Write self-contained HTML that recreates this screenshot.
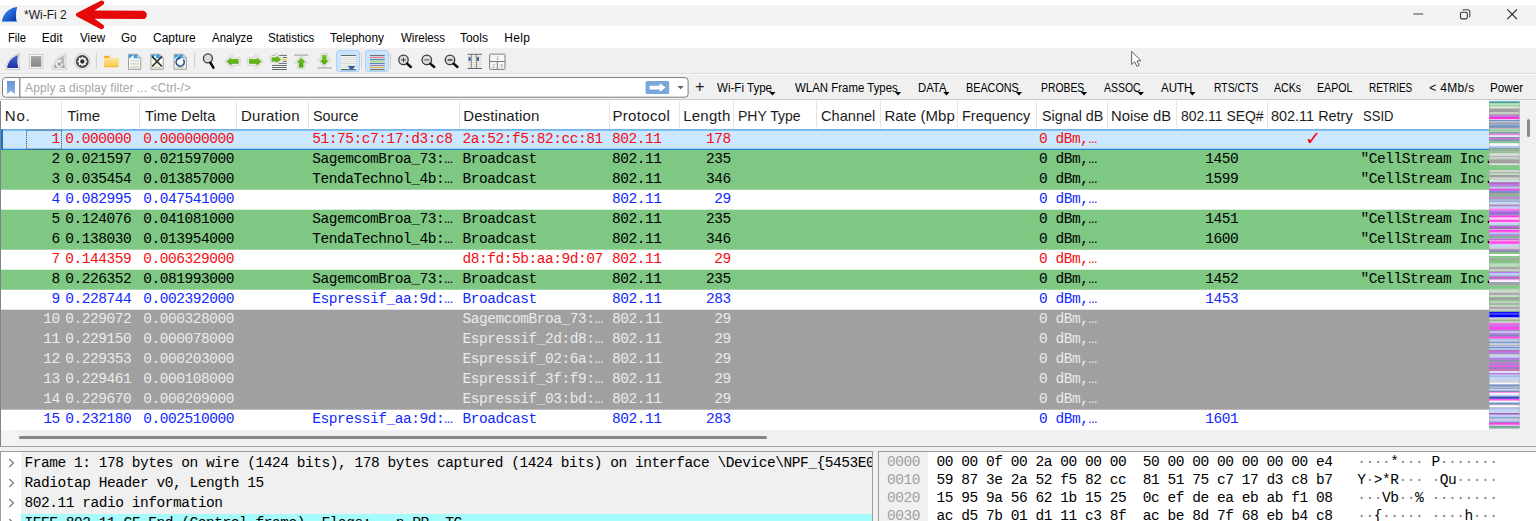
<!DOCTYPE html>
<html lang="en"><head><meta charset="utf-8"><title>Wireshark - Wi-Fi 2</title>
<style>
html,body{margin:0;padding:0;}
body{width:1536px;height:521px;position:relative;overflow:hidden;background:#fff;font-family:'Liberation Sans',sans-serif;}
body div, body span, body svg{position:absolute;}
.s{white-space:pre;line-height:20px;font-family:'Liberation Sans',sans-serif;transform-origin:0 0;}
.m i{font-style:normal;color:#858585;}
.m{white-space:pre;line-height:20px;font-family:'Liberation Mono',monospace;font-size:14.5px;letter-spacing:-0.4514px;}
</style></head>
<body>
<div style="left:0px;top:0px;width:1536px;height:5px;background:#fff;"></div>
<div style="left:0px;top:5px;width:1536px;height:21px;background:#f3f3f3;"></div>
<div style="left:0px;top:26px;width:1536px;height:22px;background:#fff;"></div>
<div style="left:0px;top:48px;width:1536px;height:25px;background:#f0f0f0;"></div>
<div style="left:0px;top:72.5px;width:1536px;height:1px;background:#dedede;"></div>
<div style="left:0px;top:73.5px;width:1536px;height:1px;background:#fafafa;"></div>
<div style="left:0px;top:74.5px;width:1536px;height:25px;background:#f0f0f0;"></div>
<div style="left:0px;top:99px;width:1536px;height:1.2px;background:#c8c8c8;"></div>
<svg style="left:0;top:0" width="1536" height="100" viewBox="0 0 1536 100">
<defs>
<linearGradient id="gfin" x1="0" y1="0" x2="1" y2="1"><stop offset="0" stop-color="#49a0f5"/><stop offset="0.55" stop-color="#1c5fd0"/><stop offset="1" stop-color="#0c2f98"/></linearGradient>
<linearGradient id="gblue" x1="0" y1="0" x2="0" y2="1"><stop offset="0" stop-color="#4c66d6"/><stop offset="1" stop-color="#1e2ea6"/></linearGradient>
<linearGradient id="ggray" x1="0" y1="0" x2="0" y2="1"><stop offset="0" stop-color="#a4a4a4"/><stop offset="1" stop-color="#868686"/></linearGradient>
<linearGradient id="ggray2" x1="0" y1="0" x2="0" y2="1"><stop offset="0" stop-color="#c4c4c4"/><stop offset="1" stop-color="#a2a2a2"/></linearGradient>
<linearGradient id="gpage" x1="0" y1="0" x2="0" y2="1"><stop offset="0" stop-color="#ffffff"/><stop offset="0.35" stop-color="#fdfdf8"/><stop offset="1" stop-color="#f2f2dc"/></linearGradient>
<linearGradient id="gband" x1="0" y1="0" x2="0" y2="1"><stop offset="0" stop-color="#2392e2"/><stop offset="0.7" stop-color="#3ca8ec"/><stop offset="1" stop-color="#bfe2f8"/></linearGradient>
<linearGradient id="gfold" x1="0" y1="0" x2="0" y2="1"><stop offset="0" stop-color="#ffe79a"/><stop offset="1" stop-color="#fcc748"/></linearGradient>
<linearGradient id="ggreen" x1="0" y1="0" x2="0" y2="1"><stop offset="0" stop-color="#7ac628"/><stop offset="1" stop-color="#4aa008"/></linearGradient>
<linearGradient id="gbm" x1="0" y1="0" x2="0" y2="1"><stop offset="0" stop-color="#6496d2"/><stop offset="1" stop-color="#8cb6e4"/></linearGradient>
<g id="page"><path d="M0.5 0.5 H9.3 L12.8 4 V15.5 H0.5 Z" fill="url(#gpage)" stroke="#969696" stroke-width="0.9"/><path d="M1 1 H9.2 L12.3 4.1 V4.9 H1 Z" fill="url(#gband)"/><path d="M2 4.9 C2.9 3 4.2 1.7 5.9 1.1 C5.4 2.4 5.5 3.7 6.2 4.9 Z" fill="#fff"/><path d="M9.3 0.6 V4 H12.7 Z" fill="#ececec" stroke="#a2a2a2" stroke-width="0.6"/></g>
<g id="mag"><circle cx="0" cy="0" r="4.6" fill="#d9d9d9" stroke="#3a3a3a" stroke-width="1.3"/><path d="M3.4 3.6 L7.4 7.4" stroke="#0a0a0a" stroke-width="2.5" stroke-linecap="round"/></g>
</defs>
<path d="M1.9 21.8 C2.6 15.5 6.5 8.6 16.6 6.9 Q17.3 6.8 17.1 7.5 C15.7 11.8 15.5 17 16.8 21.8 Z" fill="url(#gfin)"/>
<path d="M2.2 21.5 H16.4" stroke="#6db0f6" stroke-width="0.9" opacity="0.9"/>
<path d="M76.9 13 L100.7 0.7 A2.4 2.4 0 0 1 103.4 4.6 L94.6 10.5 L142.7 10.8 A4.15 4.15 0 0 1 142.7 19.1 L94.6 18.7 L103.3 25.1 A2.4 2.4 0 0 1 100.5 28.9 L76.9 16.4 A1.9 1.9 0 0 1 76.9 13 Z" fill="#e60909"/>
<path d="M1413.3 14 H1423.2" stroke="#555" stroke-width="1.1"/>
<rect x="1460.5" y="12.3" width="6.8" height="6.6" rx="1.4" fill="none" stroke="#333" stroke-width="1.1"/><path d="M1462.6 10.4 Q1462.9 9.7 1464 9.7 H1467.6 Q1469.8 9.7 1469.8 11.9 V15.6 Q1469.8 16.6 1469.1 16.9" fill="none" stroke="#444" stroke-width="1.1"/>
<path d="M1507.3 9.4 L1517 19.1 M1517 9.4 L1507.3 19.1" stroke="#222" stroke-width="1.1"/>
<path d="M1131.6 51.4 V64.5 L1134.7 61.8 L1136.9 66.4 L1139.1 65.4 L1137 60.9 L1141 60.7 Z" fill="#fff" stroke="#555" stroke-width="0.9" stroke-linejoin="round"/>
<path d="M5.5 69.4 C6.1 62.4 10.4 55.8 19.9 53.2 C18.4 58.6 18.4 63.8 20.1 69.4 Z" fill="#fbfbfb" stroke="#bcbcbc" stroke-width="0.8" stroke-linejoin="round"/><path d="M7.1 68.1 C7.5 63 11 57.5 18.4 54.8 C17 59 17 63.5 18.5 68.1 Z" fill="url(#gblue)"/>
<rect x="29.3" y="54.4" width="13.6" height="14" fill="#f8f8f8" stroke="#c6c6c6" stroke-width="0.8"/><rect x="30.9" y="56.1" width="10.4" height="10.7" fill="url(#ggray)"/>
<path d="M52.3 69.4 C52.9 62.4 57.2 55.8 66.7 53.2 C65.2 58.6 65.2 63.8 66.9 69.4 Z" fill="#f9f9f9" stroke="#c6c6c6" stroke-width="0.8" stroke-linejoin="round"/><path d="M53.9 68.1 C54.3 63 57.8 57.5 65.2 54.8 C63.8 59 63.8 63.5 65.3 68.1 Z" fill="url(#ggray2)"/>
<path d="M62.3 63.2 A3 3 0 1 1 59.6 60.9" fill="none" stroke="#f8f8f8" stroke-width="1.5"/><path d="M58.6 59.6 L61.8 60.6 L59.3 62.9 Z" fill="#f8f8f8"/>
<circle cx="82.3" cy="61.5" r="7.9" fill="#f8f8f8" stroke="#bdbdbd" stroke-width="0.8"/><circle cx="82.3" cy="61.5" r="6.45" fill="#454545"/>
<g transform="translate(82.3 61.5)" fill="#fafafa"><circle r="3.5"/><rect x="-0.95" y="-4.6" width="1.9" height="2" transform="rotate(0)"/><rect x="-0.95" y="-4.6" width="1.9" height="2" transform="rotate(45)"/><rect x="-0.95" y="-4.6" width="1.9" height="2" transform="rotate(90)"/><rect x="-0.95" y="-4.6" width="1.9" height="2" transform="rotate(135)"/><rect x="-0.95" y="-4.6" width="1.9" height="2" transform="rotate(180)"/><rect x="-0.95" y="-4.6" width="1.9" height="2" transform="rotate(225)"/><rect x="-0.95" y="-4.6" width="1.9" height="2" transform="rotate(270)"/><rect x="-0.95" y="-4.6" width="1.9" height="2" transform="rotate(315)"/><circle r="2.15" fill="#2a2a2a"/></g>
<path d="M96.3 53.2 V68.6" stroke="#cdcdcd" stroke-width="1"/>
<path d="M194.6 53.2 V68.6" stroke="#cdcdcd" stroke-width="1"/>
<path d="M361.5 53.2 V68.6" stroke="#cdcdcd" stroke-width="1"/>
<path d="M390.4 53.2 V68.6" stroke="#cdcdcd" stroke-width="1"/>
<path d="M104 58.6 V56.8 Q104 55.7 105.1 55.7 H108.5 Q109.4 55.7 109.6 56.5 L110.2 58.6 Z" fill="#f6b21e"/><rect x="104" y="57.9" width="14.6" height="9.2" rx="0.8" fill="url(#gfold)"/><path d="M104.4 66.8 H118.1" stroke="#efb02c" stroke-width="0.8"/>
<use href="#page" x="128" y="53.8"/>
<g stroke="#b9b9b2" stroke-width="0.7" fill="none"><path d="M130.6 60.8 H138.6 M130.6 63.9 H138.6 M130.6 67.1 H138.6" stroke-dasharray="1.4 0.8"/><path d="M131.6 59.6 V68 M133.8 59.6 V68 M136 59.6 V68 M138 59.6 V68" stroke-dasharray="2 1.1" stroke="#c4c4bc"/></g>
<use href="#page" x="150.4" y="53.8"/><path d="M152.6 56.9 L161.4 66 M161.4 56.9 L152.6 66" stroke="#303030" stroke-width="1.7" stroke-linecap="round"/><path d="M153.5 67.6 H160.5" stroke="#b5b5ac" stroke-width="0.7"/>
<use href="#page" x="173.6" y="53.8"/><path d="M183.4 59.6 A4.1 4.1 0 1 1 178.6 58.3" fill="none" stroke="#2a52a2" stroke-width="1.6"/><path d="M177.4 56.3 L181.2 57.2 L178.6 60 Z" fill="#2a52a2"/><path d="M176.6 67.6 H183.6" stroke="#b5b5ac" stroke-width="0.7"/>
<circle cx="207.9" cy="58.4" r="4.5" fill="#dadada" stroke="#3a3a3a" stroke-width="1.3"/><path d="M210.4 62.6 L213.4 67.6" stroke="#0a0a0a" stroke-width="2.5" stroke-linecap="round"/>
<path d="M225.6 61.4 L232 55.8 V58.5 H239.3 V64.4 H232 V67.2 Z" fill="none" stroke="#c4c4c4" stroke-width="2.1" stroke-linejoin="round"/><path d="M225.6 61.4 L232 55.8 V58.5 H239.3 V64.4 H232 V67.2 Z" fill="url(#ggreen)" stroke="#ebebeb" stroke-width="1.2" stroke-linejoin="round"/>
<path d="M262.4 61.4 L256 55.8 V58.5 H248.4 V64.4 H256 V67.2 Z" fill="none" stroke="#c4c4c4" stroke-width="2.1" stroke-linejoin="round"/><path d="M262.4 61.4 L256 55.8 V58.5 H248.4 V64.4 H256 V67.2 Z" fill="url(#ggreen)" stroke="#ebebeb" stroke-width="1.2" stroke-linejoin="round"/>
<path d="M272.4 55.4 H279" stroke="#9aa0a0" stroke-width="1"/><path d="M279 55.4 H286.8 M283 57.5 H286.8 M283 61.4 H286.8 M279 63.4 H286.8 M272 65.5 H286.8 M272 67.5 H286.8 M272 69.5 H286.8" stroke="#626a6c" stroke-width="1"/><rect x="283" y="58.6" width="3.8" height="1.7" fill="#f4de3a"/>
<path d="M282 59.3 L276 54.2 V56.6 H271 V62 H276 V64.4 Z" fill="none" stroke="#c4c4c4" stroke-width="2.1" stroke-linejoin="round"/><path d="M282 59.3 L276 54.2 V56.6 H271 V62 H276 V64.4 Z" fill="url(#ggreen)" stroke="#ebebeb" stroke-width="1.2" stroke-linejoin="round"/>
<rect x="294" y="54.2" width="14.4" height="1.9" rx="0.6" fill="#bdbdbd"/><path d="M301.2 56.6 L307 63.2 H304 V68.2 H298.2 V63.2 H295.3 Z" fill="none" stroke="#c4c4c4" stroke-width="2.1" stroke-linejoin="round"/><path d="M301.2 56.6 L307 63.2 H304 V68.2 H298.2 V63.2 H295.3 Z" fill="url(#ggreen)" stroke="#ebebeb" stroke-width="1.2" stroke-linejoin="round"/>
<rect x="317.2" y="66.9" width="14.6" height="1.8" rx="0.6" fill="#bdbdbd"/><path d="M324.3 66 L330.2 59.8 H327.2 V54.4 H321.5 V59.8 H318.2 Z" fill="none" stroke="#c4c4c4" stroke-width="2.1" stroke-linejoin="round"/><path d="M324.3 66 L330.2 59.8 H327.2 V54.4 H321.5 V59.8 H318.2 Z" fill="url(#ggreen)" stroke="#ebebeb" stroke-width="1.2" stroke-linejoin="round"/>
<rect x="336.5" y="50.5" width="23" height="21" rx="2.5" fill="#cce4fb" stroke="#a9d3f8" stroke-width="1"/>
<rect x="341" y="56" width="15" height="13.5" fill="#f7f7f5"/><path d="M341 57.6 H356 M341 59.6 H356 M341 61.6 H356 M341 63.6 H356 M341 65.6 H356 M341 67.6 H356" stroke="#d0d0cc" stroke-width="0.8"/><path d="M341 55.5 H356 M341 69.6 H356" stroke="#626a70" stroke-width="1.1"/><path d="M347.8 66 H355.2 L352.8 69.2 H350.2 Z" fill="#2c5ca8"/>
<rect x="365.4" y="50.5" width="23" height="21" rx="2.5" fill="#cce4fb" stroke="#a9d3f8" stroke-width="1"/>
<path d="M370 55.5 H384.7" stroke="#6a7278" stroke-width="1.1"/>
<path d="M370 57.5 H384.7" stroke="#f07c7c" stroke-width="1.2"/>
<path d="M370 59.6 H384.7" stroke="#5f80b2" stroke-width="1.1"/>
<path d="M370 61.5 H384.7" stroke="#a6e07c" stroke-width="1.5"/>
<path d="M370 63.5 H384.7" stroke="#5f80b2" stroke-width="1.1"/>
<path d="M370 65.5 H384.7" stroke="#a582a8" stroke-width="1.1"/>
<path d="M370 67.5 H384.7" stroke="#dcba52" stroke-width="1.3"/>
<path d="M370 69.6 H384.7" stroke="#6a7278" stroke-width="1.1"/>
<circle cx="403.5" cy="59.9" r="4.7" fill="#dcdcdc" stroke="#3a3a3a" stroke-width="1.3"/><path d="M407.1 63.6 L410.9 67" stroke="#0a0a0a" stroke-width="2.5" stroke-linecap="round"/>
<path d="M401.1 59.9 H405.9 M403.5 57.5 V62.3" stroke="#444" stroke-width="1"/>
<circle cx="426.8" cy="59.9" r="4.7" fill="#dcdcdc" stroke="#3a3a3a" stroke-width="1.3"/><path d="M430.40000000000003 63.6 L434.2 67" stroke="#0a0a0a" stroke-width="2.5" stroke-linecap="round"/>
<path d="M424.40000000000003 59.9 H429.2" stroke="#555" stroke-width="1.1"/>
<circle cx="450" cy="59.9" r="4.7" fill="#dcdcdc" stroke="#3a3a3a" stroke-width="1.3"/><path d="M453.6 63.6 L457.4 67" stroke="#0a0a0a" stroke-width="2.5" stroke-linecap="round"/>
<path d="M447.6 59.9 H452.4" stroke="#555" stroke-width="1.8"/>
<rect x="467.6" y="54.6" width="14.3" height="13.6" fill="#f2f2ec"/><path d="M467.6 56.6 H481.9 M467.6 58.6 H481.9 M467.6 60.6 H481.9 M467.6 62.6 H481.9 M467.6 64.6 H481.9 M467.6 66.6 H481.9" stroke="#d4d4ca" stroke-width="0.7"/><path d="M467.6 54.3 H481.9 M467.6 68.5 H481.9" stroke="#5e666a" stroke-width="1"/><path d="M471.3 54.3 V68.5 M476.4 54.3 V68.5" stroke="#7c7c7c" stroke-width="0.9"/><path d="M468.6 56.8 A2.2 2.2 0 0 1 468.6 61.2 Z" fill="#2c5ca8"/><path d="M479 56.8 A2.2 2.2 0 0 0 479 61.2 Z" fill="#2c5ca8"/>
<rect x="489.6" y="54.1" width="15.4" height="15.3" rx="0.8" fill="#f5f5f5" stroke="#7e7e7e" stroke-width="1"/><path d="M489.6 61.5 H505 M497.3 61.5 V69.4" stroke="#7e7e7e" stroke-width="1"/>
<text x="497.4" y="60" font-family="Liberation Serif,serif" font-size="6" fill="#8a8a8a" text-anchor="middle">1</text><text x="493.5" y="67.8" font-family="Liberation Serif,serif" font-size="6" fill="#8a8a8a" text-anchor="middle">2</text><text x="501.3" y="67.8" font-family="Liberation Serif,serif" font-size="6" fill="#8a8a8a" text-anchor="middle">3</text>
<rect x="2.5" y="77.6" width="685.6" height="19.6" rx="3" fill="#fff" stroke="#7c7c7c" stroke-width="1"/>
<path d="M19.8 78 V97" stroke="#707070" stroke-width="1.1"/>
<path d="M7 81 H15 V94.2 L11 91 L7 94.2 Z" fill="url(#gbm)"/>
<rect x="645.6" y="81.1" width="23.6" height="12.8" rx="1.5" fill="#7aa7da"/><path d="M649.6 85.8 H659.8 V83.2 L665.6 87.6 L659.8 92 V89.4 H649.6 Z" fill="#fff"/>
<path d="M677.4 86 H683.8 L680.6 89.2 Z" fill="#666"/>
<path d="M769.3 92.1 H775.5 L772.4 95.4 Z" fill="#000"/>
<path d="M894.9 92.1 H901.1 L898 95.4 Z" fill="#000"/>
<path d="M943.3 92.1 H949.5 L946.4 95.4 Z" fill="#000"/>
<path d="M1015.9 92.1 H1022.1 L1019 95.4 Z" fill="#000"/>
<path d="M1080.9 92.1 H1087.1 L1084 95.4 Z" fill="#000"/>
<path d="M1137.7 92.1 H1143.8999999999999 L1140.8 95.4 Z" fill="#000"/>
<path d="M1189.3000000000002 92.1 H1195.5 L1192.4 95.4 Z" fill="#000"/>
</svg>
<span class="s" style="left:23.75px;top:4.83px;font-size:12px;color:#1a1a1a;transform:scaleX(0.9991);">*Wi-Fi 2</span>
<span class="s" style="left:7.81px;top:28.23px;font-size:12px;color:#000;transform:scaleX(0.9349);">File</span>
<span class="s" style="left:41.75px;top:28.23px;font-size:12px;color:#000;letter-spacing:0.019px;">Edit</span>
<span class="s" style="left:79.65px;top:28.23px;font-size:12px;color:#000;transform:scaleX(0.9776);">View</span>
<span class="s" style="left:121.32px;top:28.23px;font-size:12px;color:#000;transform:scaleX(0.9709);">Go</span>
<span class="s" style="left:152.80px;top:28.23px;font-size:12px;color:#000;transform:scaleX(0.9984);">Capture</span>
<span class="s" style="left:211.70px;top:28.23px;font-size:12px;color:#000;transform:scaleX(0.9533);">Analyze</span>
<span class="s" style="left:268.42px;top:28.23px;font-size:12px;color:#000;transform:scaleX(0.9658);">Statistics</span>
<span class="s" style="left:330.45px;top:28.23px;font-size:12px;color:#000;transform:scaleX(0.9861);">Telephony</span>
<span class="s" style="left:400.65px;top:28.23px;font-size:12px;color:#000;transform:scaleX(0.9593);">Wireless</span>
<span class="s" style="left:460.45px;top:28.23px;font-size:12px;color:#000;transform:scaleX(0.9940);">Tools</span>
<span class="s" style="left:504.25px;top:28.23px;font-size:12px;color:#000;letter-spacing:0.315px;">Help</span>
<span class="s" style="left:717.05px;top:78.03px;font-size:12px;color:#000;transform:scaleX(0.9637);">Wi-Fi Type</span>
<span class="s" style="left:794.75px;top:78.03px;font-size:12px;color:#000;transform:scaleX(0.9538);">WLAN Frame Types</span>
<span class="s" style="left:917.51px;top:78.03px;font-size:12px;color:#000;transform:scaleX(0.9396);">DATA</span>
<span class="s" style="left:966.05px;top:78.03px;font-size:12px;color:#000;transform:scaleX(0.8999);">BEACONS</span>
<span class="s" style="left:1040.58px;top:78.03px;font-size:12px;color:#000;transform:scaleX(0.8649);">PROBES</span>
<span class="s" style="left:1103.80px;top:78.03px;font-size:12px;color:#000;transform:scaleX(0.8727);">ASSOC</span>
<span class="s" style="left:1161.40px;top:78.03px;font-size:12px;color:#000;transform:scaleX(0.9590);">AUTH</span>
<span class="s" style="left:1213.68px;top:78.03px;font-size:12px;color:#000;transform:scaleX(0.8638);">RTS/CTS</span>
<span class="s" style="left:1274.40px;top:78.03px;font-size:12px;color:#000;transform:scaleX(0.8819);">ACKs</span>
<span class="s" style="left:1317.26px;top:78.03px;font-size:12px;color:#000;transform:scaleX(0.8864);">EAPOL</span>
<span class="s" style="left:1368.71px;top:78.03px;font-size:12px;color:#000;transform:scaleX(0.8308);">RETRIES</span>
<span class="s" style="left:1429.15px;top:78.03px;font-size:12px;color:#000;letter-spacing:0.355px;">&lt; 4Mb/s</span>
<span class="s" style="left:1490.38px;top:78.03px;font-size:12px;color:#000;transform:scaleX(0.9736);">Power</span>
<span class="s" style="left:25.10px;top:77.83px;font-size:12px;color:#a6a6a6;letter-spacing:0.075px;">Apply a display filter ... &lt;Ctrl-/&gt;</span>
<span class="s" style="left:694.53px;top:77.28px;font-size:17px;color:#222;transform:scaleX(0.9647);">+</span>
<div style="left:0px;top:100px;width:1536px;height:347px;background:#f0f0f0;"></div>
<div style="left:0px;top:100.5px;width:1px;height:346px;background:#7c848c;"></div>
<div style="left:1px;top:100px;width:1488px;height:30px;background:#fff;"></div>
<div style="left:1px;top:129.5px;width:1488px;height:300px;background:#fff;"></div>
<span class="s" style="left:4.83px;top:106.24px;font-size:15px;color:#1c1c1c;letter-spacing:0.792px;">No.</span>
<span class="s" style="left:67.17px;top:106.24px;font-size:15px;color:#1c1c1c;letter-spacing:0.022px;">Time</span>
<span class="s" style="left:144.57px;top:106.24px;font-size:15px;color:#1c1c1c;transform:scaleX(0.9774);">Time Delta</span>
<span class="s" style="left:240.93px;top:106.24px;font-size:15px;color:#1c1c1c;letter-spacing:0.274px;">Duration</span>
<span class="s" style="left:313.45px;top:106.24px;font-size:15px;color:#1c1c1c;transform:scaleX(0.9580);">Source</span>
<span class="s" style="left:463.23px;top:106.24px;font-size:15px;color:#1c1c1c;letter-spacing:0.097px;">Destination</span>
<span class="s" style="left:612.43px;top:106.24px;font-size:15px;color:#1c1c1c;letter-spacing:0.333px;">Protocol</span>
<span class="s" style="left:683.23px;top:106.24px;font-size:15px;color:#1c1c1c;letter-spacing:0.227px;">Length</span>
<span class="s" style="left:737.50px;top:106.24px;font-size:15px;color:#1c1c1c;transform:scaleX(0.9354);">PHY Type</span>
<span class="s" style="left:820.92px;top:106.24px;font-size:15px;color:#1c1c1c;transform:scaleX(0.9726);">Channel</span>
<span class="s" style="left:884.43px;top:106.24px;font-size:15px;color:#1c1c1c;letter-spacing:0.038px;">Rate (Mbp</span>
<span class="s" style="left:961.77px;top:106.24px;font-size:15px;color:#1c1c1c;transform:scaleX(0.9627);">Frequency</span>
<span class="s" style="left:1041.65px;top:106.24px;font-size:15px;color:#1c1c1c;transform:scaleX(0.9554);">Signal dB</span>
<span class="s" style="left:1110.74px;top:106.24px;font-size:15px;color:#1c1c1c;transform:scaleX(0.9871);">Noise dB</span>
<span class="s" style="left:1181.46px;top:106.24px;font-size:15px;color:#1c1c1c;transform:scaleX(0.9285);">802.11 SEQ#</span>
<span class="s" style="left:1271.45px;top:106.24px;font-size:15px;color:#1c1c1c;transform:scaleX(0.9632);">802.11 Retry</span>
<span class="s" style="left:1362.69px;top:106.24px;font-size:15px;color:#1c1c1c;transform:scaleX(0.8701);">SSID</span>
<div style="left:61.4px;top:100.5px;width:1px;height:29px;background:#e5e5e5;"></div>
<div style="left:139.1px;top:100.5px;width:1px;height:29px;background:#e5e5e5;"></div>
<div style="left:236.0px;top:100.5px;width:1px;height:29px;background:#e5e5e5;"></div>
<div style="left:307.8px;top:100.5px;width:1px;height:29px;background:#e5e5e5;"></div>
<div style="left:458.9px;top:100.5px;width:1px;height:29px;background:#e5e5e5;"></div>
<div style="left:608.5px;top:100.5px;width:1px;height:29px;background:#e5e5e5;"></div>
<div style="left:679.1px;top:100.5px;width:1px;height:29px;background:#e5e5e5;"></div>
<div style="left:732.8px;top:100.5px;width:1px;height:29px;background:#e5e5e5;"></div>
<div style="left:816.2px;top:100.5px;width:1px;height:29px;background:#e5e5e5;"></div>
<div style="left:879.9px;top:100.5px;width:1px;height:29px;background:#e5e5e5;"></div>
<div style="left:956.8px;top:100.5px;width:1px;height:29px;background:#e5e5e5;"></div>
<div style="left:1036.0px;top:100.5px;width:1px;height:29px;background:#e5e5e5;"></div>
<div style="left:1106.8px;top:100.5px;width:1px;height:29px;background:#e5e5e5;"></div>
<div style="left:1176.2px;top:100.5px;width:1px;height:29px;background:#e5e5e5;"></div>
<div style="left:1267.0px;top:100.5px;width:1px;height:29px;background:#e5e5e5;"></div>
<svg style="left:0;top:0" width="1536" height="521" viewBox="0 0 1536 521"><rect x="1" y="149.7" width="1488" height="20.6" fill="#7fc884"/><rect x="1" y="169.7" width="1488" height="20" fill="#7fc884"/><rect x="1" y="209.7" width="1488" height="20.6" fill="#7fc884"/><rect x="1" y="229.7" width="1488" height="20" fill="#7fc884"/><rect x="1" y="269.7" width="1488" height="20" fill="#7fc884"/><rect x="1" y="309.7" width="1488" height="20.6" fill="#a0a0a0"/><rect x="1" y="329.7" width="1488" height="20.6" fill="#a0a0a0"/><rect x="1" y="349.7" width="1488" height="20.6" fill="#a0a0a0"/><rect x="1" y="369.7" width="1488" height="20.6" fill="#a0a0a0"/><rect x="1" y="389.7" width="1488" height="20" fill="#a0a0a0"/><rect x="2" y="129.29999999999998" width="1487" height="20.6" fill="#cce8ff"/><rect x="2" y="129.1" width="1487" height="1.6" fill="#64aeea"/><rect x="2" y="148.7" width="1487" height="1.3" fill="#2a88cc"/><rect x="1" y="129.2" width="2" height="20.8" fill="#1874cd"/><rect x="26.5" y="130.2" width="35" height="19" fill="none" stroke="#444" stroke-width="1" stroke-dasharray="1 1"/></svg>
<span class="m" style="left:51.55px;top:129.13px;color:#f60c12;">1</span>
<span class="m" style="left:65.20px;top:129.13px;color:#f60c12;">0.000000</span>
<span class="m" style="left:143.30px;top:129.13px;color:#f60c12;">0.000000000</span>
<span class="m" style="left:312.30px;top:129.13px;color:#f60c12;">51:75:c7:17:d3:c8</span>
<span class="m" style="left:462.40px;top:129.13px;color:#f60c12;">2a:52:f5:82:cc:81</span>
<span class="m" style="left:612.00px;top:129.13px;color:#f60c12;">802.11</span>
<span class="m" style="left:706.05px;top:129.13px;color:#f60c12;">178</span>
<span class="m" style="left:1039.10px;top:129.13px;color:#f60c12;">0 dBm,…</span>
<span style="left:1305.1px;top:129.3px;font-family:'DejaVu Sans',sans-serif;font-size:19.5px;line-height:20px;color:#f60c12;white-space:pre;">✓</span>
<span class="m" style="left:51.55px;top:149.13px;color:#000;">2</span>
<span class="m" style="left:65.20px;top:149.13px;color:#000;">0.021597</span>
<span class="m" style="left:143.30px;top:149.13px;color:#000;">0.021597000</span>
<span class="m" style="left:312.30px;top:149.13px;color:#000;">SagemcomBroa_73:…</span>
<span class="m" style="left:462.40px;top:149.13px;color:#000;">Broadcast</span>
<span class="m" style="left:612.00px;top:149.13px;color:#000;">802.11</span>
<span class="m" style="left:706.05px;top:149.13px;color:#000;">235</span>
<span class="m" style="left:1039.10px;top:149.13px;color:#000;">0 dBm,…</span>
<span class="m" style="left:1205.20px;top:149.13px;color:#000;">1450</span>
<div style="left:1361px;top:149.7px;width:128px;height:20px;overflow:hidden;">
<span class="m" style="left:-0.50px;top:-0.57px;color:#000;">"CellStream Inc.</span>
</div>
<span class="m" style="left:51.55px;top:169.13px;color:#000;">3</span>
<span class="m" style="left:65.20px;top:169.13px;color:#000;">0.035454</span>
<span class="m" style="left:143.30px;top:169.13px;color:#000;">0.013857000</span>
<span class="m" style="left:312.30px;top:169.13px;color:#000;">TendaTechnol_4b:…</span>
<span class="m" style="left:462.40px;top:169.13px;color:#000;">Broadcast</span>
<span class="m" style="left:612.00px;top:169.13px;color:#000;">802.11</span>
<span class="m" style="left:706.05px;top:169.13px;color:#000;">346</span>
<span class="m" style="left:1039.10px;top:169.13px;color:#000;">0 dBm,…</span>
<span class="m" style="left:1205.20px;top:169.13px;color:#000;">1599</span>
<div style="left:1361px;top:169.7px;width:128px;height:20px;overflow:hidden;">
<span class="m" style="left:-0.50px;top:-0.57px;color:#000;">"CellStream Inc.</span>
</div>
<span class="m" style="left:51.55px;top:189.13px;color:#1228ff;">4</span>
<span class="m" style="left:65.20px;top:189.13px;color:#1228ff;">0.082995</span>
<span class="m" style="left:143.30px;top:189.13px;color:#1228ff;">0.047541000</span>
<span class="m" style="left:612.00px;top:189.13px;color:#1228ff;">802.11</span>
<span class="m" style="left:714.30px;top:189.13px;color:#1228ff;">29</span>
<span class="m" style="left:1039.10px;top:189.13px;color:#1228ff;">0 dBm,…</span>
<span class="m" style="left:51.55px;top:209.13px;color:#000;">5</span>
<span class="m" style="left:65.20px;top:209.13px;color:#000;">0.124076</span>
<span class="m" style="left:143.30px;top:209.13px;color:#000;">0.041081000</span>
<span class="m" style="left:312.30px;top:209.13px;color:#000;">SagemcomBroa_73:…</span>
<span class="m" style="left:462.40px;top:209.13px;color:#000;">Broadcast</span>
<span class="m" style="left:612.00px;top:209.13px;color:#000;">802.11</span>
<span class="m" style="left:706.05px;top:209.13px;color:#000;">235</span>
<span class="m" style="left:1039.10px;top:209.13px;color:#000;">0 dBm,…</span>
<span class="m" style="left:1205.20px;top:209.13px;color:#000;">1451</span>
<div style="left:1361px;top:209.7px;width:128px;height:20px;overflow:hidden;">
<span class="m" style="left:-0.50px;top:-0.57px;color:#000;">"CellStream Inc.</span>
</div>
<span class="m" style="left:51.55px;top:229.13px;color:#000;">6</span>
<span class="m" style="left:65.20px;top:229.13px;color:#000;">0.138030</span>
<span class="m" style="left:143.30px;top:229.13px;color:#000;">0.013954000</span>
<span class="m" style="left:312.30px;top:229.13px;color:#000;">TendaTechnol_4b:…</span>
<span class="m" style="left:462.40px;top:229.13px;color:#000;">Broadcast</span>
<span class="m" style="left:612.00px;top:229.13px;color:#000;">802.11</span>
<span class="m" style="left:706.05px;top:229.13px;color:#000;">346</span>
<span class="m" style="left:1039.10px;top:229.13px;color:#000;">0 dBm,…</span>
<span class="m" style="left:1205.20px;top:229.13px;color:#000;">1600</span>
<div style="left:1361px;top:229.7px;width:128px;height:20px;overflow:hidden;">
<span class="m" style="left:-0.50px;top:-0.57px;color:#000;">"CellStream Inc.</span>
</div>
<span class="m" style="left:51.55px;top:249.13px;color:#f60c12;">7</span>
<span class="m" style="left:65.20px;top:249.13px;color:#f60c12;">0.144359</span>
<span class="m" style="left:143.30px;top:249.13px;color:#f60c12;">0.006329000</span>
<span class="m" style="left:462.40px;top:249.13px;color:#f60c12;">d8:fd:5b:aa:9d:07</span>
<span class="m" style="left:612.00px;top:249.13px;color:#f60c12;">802.11</span>
<span class="m" style="left:714.30px;top:249.13px;color:#f60c12;">29</span>
<span class="m" style="left:1039.10px;top:249.13px;color:#f60c12;">0 dBm,…</span>
<span class="m" style="left:51.55px;top:269.13px;color:#000;">8</span>
<span class="m" style="left:65.20px;top:269.13px;color:#000;">0.226352</span>
<span class="m" style="left:143.30px;top:269.13px;color:#000;">0.081993000</span>
<span class="m" style="left:312.30px;top:269.13px;color:#000;">SagemcomBroa_73:…</span>
<span class="m" style="left:462.40px;top:269.13px;color:#000;">Broadcast</span>
<span class="m" style="left:612.00px;top:269.13px;color:#000;">802.11</span>
<span class="m" style="left:706.05px;top:269.13px;color:#000;">235</span>
<span class="m" style="left:1039.10px;top:269.13px;color:#000;">0 dBm,…</span>
<span class="m" style="left:1205.20px;top:269.13px;color:#000;">1452</span>
<div style="left:1361px;top:269.7px;width:128px;height:20px;overflow:hidden;">
<span class="m" style="left:-0.50px;top:-0.57px;color:#000;">"CellStream Inc.</span>
</div>
<span class="m" style="left:51.55px;top:289.13px;color:#1228ff;">9</span>
<span class="m" style="left:65.20px;top:289.13px;color:#1228ff;">0.228744</span>
<span class="m" style="left:143.30px;top:289.13px;color:#1228ff;">0.002392000</span>
<span class="m" style="left:312.30px;top:289.13px;color:#1228ff;">Espressif_aa:9d:…</span>
<span class="m" style="left:462.40px;top:289.13px;color:#1228ff;">Broadcast</span>
<span class="m" style="left:612.00px;top:289.13px;color:#1228ff;">802.11</span>
<span class="m" style="left:706.05px;top:289.13px;color:#1228ff;">283</span>
<span class="m" style="left:1039.10px;top:289.13px;color:#1228ff;">0 dBm,…</span>
<span class="m" style="left:1205.20px;top:289.13px;color:#1228ff;">1453</span>
<span class="m" style="left:43.30px;top:309.13px;color:#ebebeb;">10</span>
<span class="m" style="left:65.20px;top:309.13px;color:#ebebeb;">0.229072</span>
<span class="m" style="left:143.30px;top:309.13px;color:#ebebeb;">0.000328000</span>
<span class="m" style="left:462.40px;top:309.13px;color:#ebebeb;">SagemcomBroa_73:…</span>
<span class="m" style="left:612.00px;top:309.13px;color:#ebebeb;">802.11</span>
<span class="m" style="left:714.30px;top:309.13px;color:#ebebeb;">29</span>
<span class="m" style="left:1039.10px;top:309.13px;color:#ebebeb;">0 dBm,…</span>
<span class="m" style="left:43.30px;top:329.13px;color:#ebebeb;">11</span>
<span class="m" style="left:65.20px;top:329.13px;color:#ebebeb;">0.229150</span>
<span class="m" style="left:143.30px;top:329.13px;color:#ebebeb;">0.000078000</span>
<span class="m" style="left:462.40px;top:329.13px;color:#ebebeb;">Espressif_2d:d8:…</span>
<span class="m" style="left:612.00px;top:329.13px;color:#ebebeb;">802.11</span>
<span class="m" style="left:714.30px;top:329.13px;color:#ebebeb;">29</span>
<span class="m" style="left:1039.10px;top:329.13px;color:#ebebeb;">0 dBm,…</span>
<span class="m" style="left:43.30px;top:349.13px;color:#ebebeb;">12</span>
<span class="m" style="left:65.20px;top:349.13px;color:#ebebeb;">0.229353</span>
<span class="m" style="left:143.30px;top:349.13px;color:#ebebeb;">0.000203000</span>
<span class="m" style="left:462.40px;top:349.13px;color:#ebebeb;">Espressif_02:6a:…</span>
<span class="m" style="left:612.00px;top:349.13px;color:#ebebeb;">802.11</span>
<span class="m" style="left:714.30px;top:349.13px;color:#ebebeb;">29</span>
<span class="m" style="left:1039.10px;top:349.13px;color:#ebebeb;">0 dBm,…</span>
<span class="m" style="left:43.30px;top:369.13px;color:#ebebeb;">13</span>
<span class="m" style="left:65.20px;top:369.13px;color:#ebebeb;">0.229461</span>
<span class="m" style="left:143.30px;top:369.13px;color:#ebebeb;">0.000108000</span>
<span class="m" style="left:462.40px;top:369.13px;color:#ebebeb;">Espressif_3f:f9:…</span>
<span class="m" style="left:612.00px;top:369.13px;color:#ebebeb;">802.11</span>
<span class="m" style="left:714.30px;top:369.13px;color:#ebebeb;">29</span>
<span class="m" style="left:1039.10px;top:369.13px;color:#ebebeb;">0 dBm,…</span>
<span class="m" style="left:43.30px;top:389.13px;color:#ebebeb;">14</span>
<span class="m" style="left:65.20px;top:389.13px;color:#ebebeb;">0.229670</span>
<span class="m" style="left:143.30px;top:389.13px;color:#ebebeb;">0.000209000</span>
<span class="m" style="left:462.40px;top:389.13px;color:#ebebeb;">Espressif_03:bd:…</span>
<span class="m" style="left:612.00px;top:389.13px;color:#ebebeb;">802.11</span>
<span class="m" style="left:714.30px;top:389.13px;color:#ebebeb;">29</span>
<span class="m" style="left:1039.10px;top:389.13px;color:#ebebeb;">0 dBm,…</span>
<span class="m" style="left:43.30px;top:409.13px;color:#1228ff;">15</span>
<span class="m" style="left:65.20px;top:409.13px;color:#1228ff;">0.232180</span>
<span class="m" style="left:143.30px;top:409.13px;color:#1228ff;">0.002510000</span>
<span class="m" style="left:312.30px;top:409.13px;color:#1228ff;">Espressif_aa:9d:…</span>
<span class="m" style="left:462.40px;top:409.13px;color:#1228ff;">Broadcast</span>
<span class="m" style="left:612.00px;top:409.13px;color:#1228ff;">802.11</span>
<span class="m" style="left:706.05px;top:409.13px;color:#1228ff;">283</span>
<span class="m" style="left:1039.10px;top:409.13px;color:#1228ff;">0 dBm,…</span>
<span class="m" style="left:1205.20px;top:409.13px;color:#1228ff;">1601</span>
<div style="left:1px;top:429.7px;width:1488px;height:16.5px;background:#f0f0f0;"></div>
<div style="left:1px;top:429.7px;width:16px;height:16.5px;background:#f4f4f4;"></div>
<div style="left:18.5px;top:436px;width:748px;height:2.5px;background:#868686;border-radius:1.5px;"></div>
<div style="left:0px;top:445.8px;width:1536px;height:1.4px;background:#a2a6ac;"></div>
<div style="left:0px;top:447.2px;width:1536px;height:4.5px;background:#f0f0f0;"></div>
<div style="left:1527px;top:118.5px;width:3px;height:18px;background:#8a8a8a;border-radius:1.5px;"></div>
<div style="left:0px;top:451px;width:873px;height:70px;background:#fff;box-sizing:border-box;border:1px solid #9c9c9c;border-bottom:none;"></div>
<div style="left:21px;top:452px;width:851px;height:61.5px;background:#f0f0f0;"></div>
<div style="left:21px;top:513.5px;width:851px;height:8px;background:#a6fcfc;"></div>
<div style="left:21px;top:453.5px;width:851px;height:20px;overflow:hidden;">
<span class="m" style="left:3.40px;top:-0.47px;color:#000;">Frame 1: 178 bytes on wire (1424 bits), 178 bytes captured (1424 bits) on interface \Device\NPF_{5453E0</span>
</div>
<svg style="left:8px;top:458px" width="7" height="10" viewBox="0 0 7 10"><path d="M1.2 1 L5.4 5 L1.2 9" fill="none" stroke="#7a7a7a" stroke-width="1.2"/></svg>
<div style="left:21px;top:473.5px;width:851px;height:20px;overflow:hidden;">
<span class="m" style="left:3.40px;top:-0.47px;color:#000;">Radiotap Header v0, Length 15</span>
</div>
<svg style="left:8px;top:478px" width="7" height="10" viewBox="0 0 7 10"><path d="M1.2 1 L5.4 5 L1.2 9" fill="none" stroke="#7a7a7a" stroke-width="1.2"/></svg>
<div style="left:21px;top:493.5px;width:851px;height:20px;overflow:hidden;">
<span class="m" style="left:3.40px;top:-0.47px;color:#000;">802.11 radio information</span>
</div>
<svg style="left:8px;top:498px" width="7" height="10" viewBox="0 0 7 10"><path d="M1.2 1 L5.4 5 L1.2 9" fill="none" stroke="#7a7a7a" stroke-width="1.2"/></svg>
<div style="left:21px;top:513.5px;width:851px;height:20px;overflow:hidden;">
<span class="m" style="left:3.40px;top:-0.47px;color:#000;">IEEE 802.11 CF-End (Control-frame), Flags: ..p.PR..TC</span>
</div>
<svg style="left:8px;top:518px" width="7" height="10" viewBox="0 0 7 10"><path d="M1.2 1 L5.4 5 L1.2 9" fill="none" stroke="#7a7a7a" stroke-width="1.2"/></svg>
<div style="left:873px;top:451px;width:5px;height:70px;background:#f0f0f0;"></div>
<div style="left:878px;top:451px;width:658px;height:70px;background:#fff;box-sizing:border-box;border:1px solid #9c9c9c;border-bottom:none;border-right:none;"></div>
<div style="left:879px;top:452px;width:48.6px;height:69px;background:#f0f0f0;"></div>
<span class="m" style="left:887.00px;top:452.43px;color:#a0a0a0;">0000</span>
<span class="m" style="left:936.50px;top:452.43px;color:#000;">00 00 0f 00 2a 00 00 00  50 00 00 00 00 00 00 e4</span>
<span class="m" style="left:1357.25px;top:452.43px;color:#000;"><i>····</i>*<i>···</i> P<i>·······</i></span>
<span class="m" style="left:887.00px;top:470.28px;color:#a0a0a0;">0010</span>
<span class="m" style="left:936.50px;top:470.28px;color:#000;">59 87 3e 2a 52 f5 82 cc  81 51 75 c7 17 d3 c8 b7</span>
<span class="m" style="left:1357.25px;top:470.28px;color:#000;">Y<i>·</i>&gt;*R<i>···</i> <i>·</i>Qu<i>·····</i></span>
<span class="m" style="left:887.00px;top:488.13px;color:#a0a0a0;">0020</span>
<span class="m" style="left:936.50px;top:488.13px;color:#000;">15 95 9a 56 62 1b 15 25  0c ef de ea eb ab f1 08</span>
<span class="m" style="left:1357.25px;top:488.13px;color:#000;"><i>···</i>Vb<i>··</i>% <i>········</i></span>
<span class="m" style="left:887.00px;top:505.98px;color:#a0a0a0;">0030</span>
<span class="m" style="left:936.50px;top:505.98px;color:#000;">ac d5 7b 01 d1 11 c3 8f  ac be 8d 7f 68 eb b4 c8</span>
<span class="m" style="left:1357.25px;top:505.98px;color:#000;"><i>··</i>{<i>·····</i> <i>····</i>h<i>···</i></span>
<svg style="left:1489px;top:101.2px" width="30.5" height="327.4" viewBox="0 0 30.5 327.4" preserveAspectRatio="none" shape-rendering="auto">
<rect x="0" y="0.0" width="30.5" height="1.15" fill="#70b4e4"/>
<rect x="0" y="1.0" width="30.5" height="1.45" fill="#4fa088"/>
<rect x="0" y="2.3" width="30.5" height="0.55" fill="#80c884"/>
<rect x="0" y="2.7" width="30.5" height="1.05" fill="#e8f4e8"/>
<rect x="0" y="3.6" width="30.5" height="1.35" fill="#80c884"/>
<rect x="0" y="4.8" width="30.5" height="0.95" fill="#d0e8d0"/>
<rect x="0" y="5.6" width="30.5" height="1.05" fill="#a0d8a0"/>
<rect x="0" y="6.5" width="30.5" height="1.05" fill="#f0f0f0"/>
<rect x="0" y="7.4" width="30.5" height="4.25" fill="#a0a0a0"/>
<rect x="0" y="11.5" width="30.5" height="1.25" fill="#e0e0e0"/>
<rect x="0" y="12.6" width="30.5" height="1.05" fill="#80c080"/>
<rect x="0" y="13.5" width="30.5" height="1.15" fill="#e060c0"/>
<rect x="0" y="14.5" width="30.5" height="1.35" fill="#9080e0"/>
<rect x="0" y="15.7" width="30.5" height="2.45" fill="#ff30e0"/>
<rect x="0" y="18.0" width="30.5" height="1.05" fill="#f8d0f0"/>
<rect x="0" y="18.9" width="30.5" height="1.15" fill="#7088b0"/>
<rect x="0" y="19.9" width="30.5" height="1.35" fill="#b0c8f0"/>
<rect x="0" y="21.1" width="30.5" height="2.45" fill="#a8a8a8"/>
<rect x="0" y="23.4" width="30.5" height="1.25" fill="#6898e0"/>
<rect x="0" y="24.5" width="30.5" height="2.05" fill="#7090c8"/>
<rect x="0" y="26.4" width="30.5" height="1.35" fill="#808890"/>
<rect x="0" y="27.6" width="30.5" height="1.15" fill="#d8d8d8"/>
<rect x="0" y="28.6" width="30.5" height="1.85" fill="#88cc88"/>
<rect x="0" y="30.3" width="30.5" height="0.85" fill="#b0dcb0"/>
<rect x="0" y="31.0" width="30.5" height="1.15" fill="#7098c0"/>
<rect x="0" y="32.0" width="30.5" height="1.15" fill="#b0a0b8"/>
<rect x="0" y="33.0" width="30.5" height="1.15" fill="#f080e0"/>
<rect x="0" y="34.0" width="30.5" height="1.05" fill="#f0d8f8"/>
<rect x="0" y="34.9" width="30.5" height="1.25" fill="#e8e8ff"/>
<rect x="0" y="36.0" width="30.5" height="1.15" fill="#8890b0"/>
<rect x="0" y="37.0" width="30.5" height="0.95" fill="#d068c4"/>
<rect x="0" y="37.8" width="30.5" height="1.05" fill="#a080e0"/>
<rect x="0" y="38.7" width="30.5" height="1.15" fill="#7080a0"/>
<rect x="0" y="39.7" width="30.5" height="1.05" fill="#70a8b0"/>
<rect x="0" y="40.6" width="30.5" height="1.55" fill="#88c888"/>
<rect x="0" y="42.0" width="30.5" height="1.05" fill="#e0e8f0"/>
<rect x="0" y="42.9" width="30.5" height="2.15" fill="#f8f8ff"/>
<rect x="0" y="44.9" width="30.5" height="2.05" fill="#b4ccf4"/>
<rect x="0" y="46.8" width="30.5" height="1.05" fill="#7888a0"/>
<rect x="0" y="47.7" width="30.5" height="3.05" fill="#90b890"/>
<rect x="0" y="50.6" width="30.5" height="1.35" fill="#a0a8a0"/>
<rect x="0" y="51.8" width="30.5" height="1.25" fill="#b0e0b0"/>
<rect x="0" y="52.9" width="30.5" height="2.05" fill="#e0e0e0"/>
<rect x="0" y="54.8" width="30.5" height="1.75" fill="#b0b0b0"/>
<rect x="0" y="56.4" width="30.5" height="1.25" fill="#d8d8d8"/>
<rect x="0" y="57.5" width="30.5" height="1.15" fill="#a0c0a0"/>
<rect x="0" y="58.5" width="30.5" height="4.15" fill="#a0a0a0"/>
<rect x="0" y="62.5" width="30.5" height="1.75" fill="#e0e0e0"/>
<rect x="0" y="64.1" width="30.5" height="5.45" fill="#80c884"/>
<rect x="0" y="69.4" width="30.5" height="1.75" fill="#d8d8d8"/>
<rect x="0" y="71.0" width="30.5" height="1.45" fill="#a8a8a8"/>
<rect x="0" y="72.3" width="30.5" height="1.85" fill="#b8dcb8"/>
<rect x="0" y="74.0" width="30.5" height="2.65" fill="#a0a0a0"/>
<rect x="0" y="76.5" width="30.5" height="2.25" fill="#d0d0d0"/>
<rect x="0" y="78.6" width="30.5" height="1.15" fill="#a8d8a8"/>
<rect x="0" y="79.6" width="30.5" height="1.35" fill="#e0f0f8"/>
<rect x="0" y="80.8" width="30.5" height="1.05" fill="#8890b0"/>
<rect x="0" y="81.7" width="30.5" height="1.35" fill="#c060c0"/>
<rect x="0" y="82.9" width="30.5" height="2.05" fill="#b878e8"/>
<rect x="0" y="84.8" width="30.5" height="1.05" fill="#a080c0"/>
<rect x="0" y="85.7" width="30.5" height="1.15" fill="#c8c8d0"/>
<rect x="0" y="86.7" width="30.5" height="1.15" fill="#a8c0f0"/>
<rect x="0" y="87.7" width="30.5" height="2.25" fill="#e850e8"/>
<rect x="0" y="89.8" width="30.5" height="1.15" fill="#7890c8"/>
<rect x="0" y="90.8" width="30.5" height="1.15" fill="#6888c0"/>
<rect x="0" y="91.8" width="30.5" height="2.15" fill="#a0a0a0"/>
<rect x="0" y="93.8" width="30.5" height="1.85" fill="#80c080"/>
<rect x="0" y="95.5" width="30.5" height="1.05" fill="#a078c0"/>
<rect x="0" y="96.4" width="30.5" height="1.15" fill="#c868d0"/>
<rect x="0" y="97.4" width="30.5" height="1.35" fill="#8890b0"/>
<rect x="0" y="98.6" width="30.5" height="1.35" fill="#a8c0e8"/>
<rect x="0" y="99.8" width="30.5" height="1.15" fill="#90a0b8"/>
<rect x="0" y="100.8" width="30.5" height="2.95" fill="#c8daf8"/>
<rect x="0" y="103.6" width="30.5" height="1.15" fill="#9080a0"/>
<rect x="0" y="104.6" width="30.5" height="1.05" fill="#b070c8"/>
<rect x="0" y="105.5" width="30.5" height="2.05" fill="#c0d0f8"/>
<rect x="0" y="107.4" width="30.5" height="2.05" fill="#f888e8"/>
<rect x="0" y="109.3" width="30.5" height="1.15" fill="#c858e0"/>
<rect x="0" y="110.3" width="30.5" height="1.85" fill="#b060f0"/>
<rect x="0" y="112.0" width="30.5" height="1.35" fill="#8878b8"/>
<rect x="0" y="113.2" width="30.5" height="0.65" fill="#7088b0"/>
<rect x="0" y="113.7" width="30.5" height="0.95" fill="#a060c8"/>
<rect x="0" y="114.5" width="30.5" height="2.25" fill="#ff40e8"/>
<rect x="0" y="116.6" width="30.5" height="1.75" fill="#ffd8f8"/>
<rect x="0" y="118.2" width="30.5" height="1.05" fill="#ff90f0"/>
<rect x="0" y="119.1" width="30.5" height="1.95" fill="#ff40e8"/>
<rect x="0" y="120.9" width="30.5" height="1.15" fill="#f8d0f8"/>
<rect x="0" y="121.9" width="30.5" height="2.55" fill="#c0d8f8"/>
<rect x="0" y="124.3" width="30.5" height="1.05" fill="#8890a8"/>
<rect x="0" y="125.2" width="30.5" height="1.95" fill="#b060c8"/>
<rect x="0" y="127.0" width="30.5" height="1.15" fill="#9080b0"/>
<rect x="0" y="128.0" width="30.5" height="1.05" fill="#f0b0e0"/>
<rect x="0" y="128.9" width="30.5" height="2.05" fill="#ff40e8"/>
<rect x="0" y="130.8" width="30.5" height="1.15" fill="#f090e8"/>
<rect x="0" y="131.8" width="30.5" height="1.25" fill="#b8d0f8"/>
<rect x="0" y="132.9" width="30.5" height="1.95" fill="#b888e8"/>
<rect x="0" y="134.7" width="30.5" height="1.15" fill="#8088a8"/>
<rect x="0" y="135.7" width="30.5" height="1.85" fill="#80c080"/>
<rect x="0" y="137.4" width="30.5" height="2.05" fill="#c070e0"/>
<rect x="0" y="139.3" width="30.5" height="1.25" fill="#ff90f0"/>
<rect x="0" y="140.4" width="30.5" height="2.45" fill="#ff40e8"/>
<rect x="0" y="142.7" width="30.5" height="1.15" fill="#f0a0e8"/>
<rect x="0" y="143.7" width="30.5" height="2.25" fill="#c0d8f8"/>
<rect x="0" y="145.8" width="30.5" height="2.05" fill="#d0d0d0"/>
<rect x="0" y="147.7" width="30.5" height="1.15" fill="#c0a0c0"/>
<rect x="0" y="148.7" width="30.5" height="1.15" fill="#a070c8"/>
<rect x="0" y="149.7" width="30.5" height="1.25" fill="#7888b0"/>
<rect x="0" y="150.8" width="30.5" height="2.25" fill="#80c080"/>
<rect x="0" y="152.9" width="30.5" height="2.25" fill="#ffffff"/>
<rect x="0" y="155.0" width="30.5" height="1.75" fill="#80c884"/>
<rect x="0" y="156.6" width="30.5" height="3.55" fill="#94b494"/>
<rect x="0" y="160.0" width="30.5" height="2.45" fill="#80c884"/>
<rect x="0" y="162.3" width="30.5" height="0.95" fill="#b0c8b0"/>
<rect x="0" y="163.1" width="30.5" height="2.85" fill="#b8e0b8"/>
<rect x="0" y="165.8" width="30.5" height="2.85" fill="#a8a8a8"/>
<rect x="0" y="168.5" width="30.5" height="1.65" fill="#c8d8c0"/>
<rect x="0" y="170.0" width="30.5" height="1.05" fill="#b0b0b0"/>
<rect x="0" y="170.9" width="30.5" height="1.15" fill="#c070e8"/>
<rect x="0" y="171.9" width="30.5" height="2.85" fill="#b8d0f8"/>
<rect x="0" y="174.6" width="30.5" height="1.05" fill="#8098c0"/>
<rect x="0" y="175.5" width="30.5" height="1.95" fill="#c060c0"/>
<rect x="0" y="177.3" width="30.5" height="1.15" fill="#9070b0"/>
<rect x="0" y="178.3" width="30.5" height="1.25" fill="#ff90f0"/>
<rect x="0" y="179.4" width="30.5" height="1.85" fill="#fff8ff"/>
<rect x="0" y="181.1" width="30.5" height="1.15" fill="#8098c0"/>
<rect x="0" y="182.1" width="30.5" height="2.65" fill="#a0a0a0"/>
<rect x="0" y="184.6" width="30.5" height="3.25" fill="#80c884"/>
<rect x="0" y="187.7" width="30.5" height="1.05" fill="#a0b8a0"/>
<rect x="0" y="188.6" width="30.5" height="2.25" fill="#c0e0c0"/>
<rect x="0" y="190.7" width="30.5" height="1.15" fill="#d0d0d0"/>
<rect x="0" y="191.7" width="30.5" height="2.65" fill="#a8a8a8"/>
<rect x="0" y="194.2" width="30.5" height="0.85" fill="#d0d0d0"/>
<rect x="0" y="194.9" width="30.5" height="1.15" fill="#c0e8c0"/>
<rect x="0" y="195.9" width="30.5" height="1.15" fill="#a0b0a0"/>
<rect x="0" y="196.9" width="30.5" height="2.45" fill="#a0a0a0"/>
<rect x="0" y="199.2" width="30.5" height="1.65" fill="#88c888"/>
<rect x="0" y="200.7" width="30.5" height="1.35" fill="#c0e0c0"/>
<rect x="0" y="201.9" width="30.5" height="1.25" fill="#b0b0b0"/>
<rect x="0" y="203.0" width="30.5" height="0.95" fill="#90b090"/>
<rect x="0" y="203.8" width="30.5" height="1.25" fill="#c0e0c0"/>
<rect x="0" y="204.9" width="30.5" height="1.05" fill="#c8c8c8"/>
<rect x="0" y="205.8" width="30.5" height="2.35" fill="#a8a8a8"/>
<rect x="0" y="208.0" width="30.5" height="1.65" fill="#d0d0d0"/>
<rect x="0" y="209.5" width="30.5" height="1.55" fill="#90b890"/>
<rect x="0" y="210.9" width="30.5" height="1.85" fill="#1010ff"/>
<rect x="0" y="212.6" width="30.5" height="1.05" fill="#3838e8"/>
<rect x="0" y="213.5" width="30.5" height="3.05" fill="#0000ff"/>
<rect x="0" y="216.4" width="30.5" height="1.15" fill="#c0c0c8"/>
<rect x="0" y="217.4" width="30.5" height="1.15" fill="#d0d0d0"/>
<rect x="0" y="218.4" width="30.5" height="2.05" fill="#98b098"/>
<rect x="0" y="220.3" width="30.5" height="2.05" fill="#c0d0c0"/>
<rect x="0" y="222.2" width="30.5" height="1.65" fill="#ff50e8"/>
<rect x="0" y="223.7" width="30.5" height="2.15" fill="#c070e8"/>
<rect x="0" y="225.7" width="30.5" height="3.15" fill="#ff40e8"/>
<rect x="0" y="228.7" width="30.5" height="1.15" fill="#b070d8"/>
<rect x="0" y="229.7" width="30.5" height="1.05" fill="#8090b0"/>
<rect x="0" y="230.6" width="30.5" height="1.35" fill="#d8e0f8"/>
<rect x="0" y="231.8" width="30.5" height="2.05" fill="#b878e8"/>
<rect x="0" y="233.7" width="30.5" height="1.35" fill="#7888b0"/>
<rect x="0" y="234.9" width="30.5" height="0.85" fill="#a070c8"/>
<rect x="0" y="235.6" width="30.5" height="2.05" fill="#ff40e8"/>
<rect x="0" y="237.5" width="30.5" height="0.95" fill="#d0b0d0"/>
<rect x="0" y="238.3" width="30.5" height="1.05" fill="#90a8d0"/>
<rect x="0" y="239.2" width="30.5" height="1.55" fill="#c0d4f8"/>
<rect x="0" y="240.6" width="30.5" height="1.35" fill="#7088b8"/>
<rect x="0" y="241.8" width="30.5" height="1.15" fill="#b0c8f0"/>
<rect x="0" y="242.8" width="30.5" height="1.45" fill="#d0d0d0"/>
<rect x="0" y="244.1" width="30.5" height="1.15" fill="#a0a8c0"/>
<rect x="0" y="245.1" width="30.5" height="1.05" fill="#b8d0f8"/>
<rect x="0" y="246.0" width="30.5" height="1.25" fill="#7088b8"/>
<rect x="0" y="247.1" width="30.5" height="1.75" fill="#b8d0f8"/>
<rect x="0" y="248.7" width="30.5" height="1.15" fill="#8878b0"/>
<rect x="0" y="249.7" width="30.5" height="1.25" fill="#d060d0"/>
<rect x="0" y="250.8" width="30.5" height="1.85" fill="#b878e8"/>
<rect x="0" y="252.5" width="30.5" height="1.15" fill="#8088a8"/>
<rect x="0" y="253.5" width="30.5" height="1.25" fill="#d0d8e0"/>
<rect x="0" y="254.6" width="30.5" height="2.25" fill="#c0d4f8"/>
<rect x="0" y="256.7" width="30.5" height="2.15" fill="#b878e8"/>
<rect x="0" y="258.7" width="30.5" height="1.15" fill="#8088a0"/>
<rect x="0" y="259.7" width="30.5" height="1.05" fill="#7890b8"/>
<rect x="0" y="260.6" width="30.5" height="1.05" fill="#9080b8"/>
<rect x="0" y="261.5" width="30.5" height="1.35" fill="#d060d0"/>
<rect x="0" y="262.7" width="30.5" height="1.15" fill="#9878b8"/>
<rect x="0" y="263.7" width="30.5" height="1.05" fill="#a870d0"/>
<rect x="0" y="264.6" width="30.5" height="1.25" fill="#ff40e8"/>
<rect x="0" y="265.7" width="30.5" height="1.15" fill="#a070d0"/>
<rect x="0" y="266.7" width="30.5" height="1.15" fill="#8870a0"/>
<rect x="0" y="267.7" width="30.5" height="1.25" fill="#d060d0"/>
<rect x="0" y="268.8" width="30.5" height="1.35" fill="#c080b0"/>
<rect x="0" y="270.0" width="30.5" height="1.05" fill="#e0d8f0"/>
<rect x="0" y="270.9" width="30.5" height="1.15" fill="#f0f0ff"/>
<rect x="0" y="271.9" width="30.5" height="1.85" fill="#b878e8"/>
<rect x="0" y="273.6" width="30.5" height="1.15" fill="#c0d4f8"/>
<rect x="0" y="274.6" width="30.5" height="1.25" fill="#88a8e0"/>
<rect x="0" y="275.7" width="30.5" height="4.25" fill="#c0d6f8"/>
<rect x="0" y="279.8" width="30.5" height="2.05" fill="#d0d0d0"/>
<rect x="0" y="281.7" width="30.5" height="1.55" fill="#f8f8ff"/>
<rect x="0" y="283.1" width="30.5" height="1.05" fill="#98b8e8"/>
<rect x="0" y="284.0" width="30.5" height="1.25" fill="#8090b0"/>
<rect x="0" y="285.1" width="30.5" height="1.15" fill="#a0a8c0"/>
<rect x="0" y="286.1" width="30.5" height="1.25" fill="#a0b8e8"/>
<rect x="0" y="287.2" width="30.5" height="1.15" fill="#8898b8"/>
<rect x="0" y="288.2" width="30.5" height="1.15" fill="#d0dcf0"/>
<rect x="0" y="289.2" width="30.5" height="1.05" fill="#90a8e0"/>
<rect x="0" y="290.1" width="30.5" height="0.95" fill="#7080a8"/>
<rect x="0" y="290.9" width="30.5" height="1.05" fill="#ff70e8"/>
<rect x="0" y="291.8" width="30.5" height="1.95" fill="#fff8ff"/>
<rect x="0" y="293.6" width="30.5" height="1.65" fill="#c0d4f8"/>
<rect x="0" y="295.1" width="30.5" height="1.15" fill="#7088c0"/>
<rect x="0" y="296.1" width="30.5" height="1.05" fill="#3040b0"/>
<rect x="0" y="297.0" width="30.5" height="1.15" fill="#6060e8"/>
<rect x="0" y="298.0" width="30.5" height="1.85" fill="#ff50e8"/>
<rect x="0" y="299.7" width="30.5" height="1.55" fill="#ffffff"/>
<rect x="0" y="301.1" width="30.5" height="0.95" fill="#b0c8f0"/>
<rect x="0" y="301.9" width="30.5" height="1.05" fill="#6890d0"/>
<rect x="0" y="302.8" width="30.5" height="1.15" fill="#8890a0"/>
<rect x="0" y="303.8" width="30.5" height="1.15" fill="#e8e8f0"/>
<rect x="0" y="304.8" width="30.5" height="1.85" fill="#ffffff"/>
<rect x="0" y="306.5" width="30.5" height="1.05" fill="#8090b0"/>
<rect x="0" y="307.4" width="30.5" height="1.15" fill="#a8c0f0"/>
<rect x="0" y="308.4" width="30.5" height="2.45" fill="#b8d0f8"/>
<rect x="0" y="310.7" width="30.5" height="1.35" fill="#d8e4f8"/>
<rect x="0" y="311.9" width="30.5" height="1.05" fill="#905890"/>
<rect x="0" y="312.8" width="30.5" height="1.15" fill="#c070e0"/>
<rect x="0" y="313.8" width="30.5" height="2.05" fill="#c0d4f8"/>
<rect x="0" y="315.7" width="30.5" height="1.05" fill="#90b0e8"/>
<rect x="0" y="316.6" width="30.5" height="1.15" fill="#7088b8"/>
<rect x="0" y="317.6" width="30.5" height="1.15" fill="#d0d0d0"/>
<rect x="0" y="318.6" width="30.5" height="2.25" fill="#b8cef8"/>
<rect x="0" y="320.7" width="30.5" height="1.15" fill="#7080a8"/>
<rect x="0" y="321.7" width="30.5" height="2.25" fill="#ff40e8"/>
<rect x="0" y="323.8" width="30.5" height="1.05" fill="#f8e0f8"/>
<rect x="0" y="324.7" width="30.5" height="1.15" fill="#7888a8"/>
<rect x="0" y="325.7" width="30.5" height="1.85" fill="#78b0a0"/>
<path d="M0.3 0 V327.4 M30.2 0 V327.4" stroke="#9a9a9a" stroke-width="0.6" opacity="0.8"/>
</svg>
</body></html>
